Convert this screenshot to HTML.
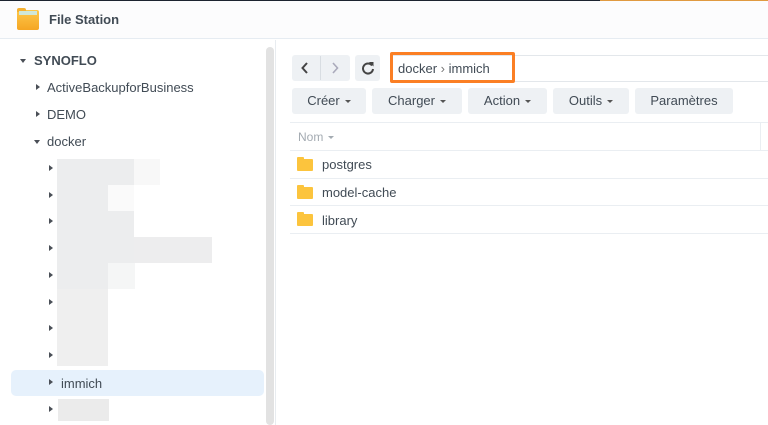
<!DOCTYPE html>
<html><head><meta charset="utf-8"><style>
*{box-sizing:border-box;margin:0;padding:0}
body{width:768px;height:425px;overflow:hidden;background:#fff;font-family:"Liberation Sans",sans-serif;position:relative;color:#414b55}
.a{position:absolute}
.topline{left:0;top:0;width:768px;height:1px;background:#1c2430}
.title{left:0;top:1px;width:768px;height:38px;background:#fcfcfd;border-bottom:1px solid #e6ecf2}
.tt{left:49px;top:12px;font-size:13px;font-weight:bold;color:#414b55}
.tri{width:0;height:0;border-left:4px solid #4a4f57;border-top:3.5px solid transparent;border-bottom:3.5px solid transparent}
.trd{width:0;height:0;border-top:4px solid #4a4f57;border-left:3.5px solid transparent;border-right:3.5px solid transparent}
.lbl{font-size:13px;color:#414b55}
.blk{background:#ecedee}
.btn{background:#eef1f4;border-radius:3px;font-size:13px;color:#414b55;text-align:center;line-height:26px;height:26px}
.car{display:inline-block;width:0;height:0;border-top:3px solid #555;border-left:3px solid transparent;border-right:3px solid transparent;vertical-align:middle;margin-left:5px}
.row{left:290px;width:478px;height:1px;background:#eaeef2}
.fold{width:16px;height:12px;background:#fcc43d;border-radius:1px}
.fold:before{content:"";position:absolute;left:0;top:-2px;width:7px;height:3px;background:#fcc43d;border-radius:1px 1px 0 0}
</style></head><body>
<div class="a topline"></div>
<div class="a" style="left:600px;top:0;width:168px;height:1px;background:#e09a40"></div>
<div class="a title"></div>
<div class="a" style="left:17px;top:10px;width:22px;height:20px;background:linear-gradient(#fdc84a,#f5a623);border-radius:2px"></div>
<div class="a" style="left:17px;top:8px;width:9px;height:4px;background:#f5b030;border-radius:2px 2px 0 0"></div>
<div class="a" style="left:19px;top:11px;width:18px;height:4px;background:#cfe7d8"></div>
<div class="a tt">File Station</div>
<!-- left -->
<div class="a" style="left:266px;top:47px;width:8px;height:378px;background:#e2e2e2;border-radius:4px"></div>
<div class="a" style="left:275px;top:40px;width:1px;height:385px;background:#e8ecf0"></div>
<div class="a trd" style="left:20px;top:59px"></div>
<div class="a lbl" style="left:34px;top:53px;font-weight:bold">SYNOFLO</div>
<div class="a tri" style="left:36px;top:84px"></div>
<div class="a lbl" style="left:47px;top:80px">ActiveBackupforBusiness</div>
<div class="a tri" style="left:36px;top:111px"></div>
<div class="a lbl" style="left:47px;top:107px">DEMO</div>
<div class="a trd" style="left:34px;top:140px"></div>
<div class="a lbl" style="left:47px;top:134px">docker</div>
<div class="a tri" style="left:49px;top:165px"></div>
<div class="a tri" style="left:49px;top:192px"></div>
<div class="a tri" style="left:49px;top:218px"></div>
<div class="a tri" style="left:49px;top:245px"></div>
<div class="a tri" style="left:49px;top:272px"></div>
<div class="a tri" style="left:49px;top:299px"></div>
<div class="a tri" style="left:49px;top:325px"></div>
<div class="a tri" style="left:49px;top:352px"></div>
<div class="a tri" style="left:49px;top:406px"></div>
<div class="a blk" style="left:57px;top:159px;width:77px;height:57px"></div>
<div class="a" style="left:134px;top:159px;width:26px;height:26px;background:#f8f8f8"></div>
<div class="a" style="left:108px;top:185px;width:26px;height:26px;background:#fafafa"></div>
<div class="a blk" style="left:57px;top:211px;width:77px;height:52px"></div>
<div class="a" style="left:134px;top:237px;width:78px;height:26px;background:#ededee"></div>
<div class="a blk" style="left:57px;top:263px;width:51px;height:26px"></div>
<div class="a" style="left:108px;top:263px;width:27px;height:26px;background:#f5f6f6"></div>
<div class="a blk" style="left:57px;top:289px;width:51px;height:77px;background:#efefef"></div>
<div class="a" style="left:11px;top:370px;width:253px;height:26px;background:#e6f1fc;border-radius:5px"></div>
<div class="a tri" style="left:49px;top:379px"></div>
<div class="a lbl" style="left:61px;top:376px">immich</div>
<div class="a blk" style="left:58px;top:399px;width:51px;height:22px;background:#ebebeb"></div>
<!-- right -->
<div class="a" style="left:292px;top:55px;width:58px;height:26px;background:#eef1f4;border-radius:3px"></div>
<div class="a" style="left:320px;top:56px;width:1px;height:24px;background:#d8dde2"></div>
<svg class="a" style="left:300px;top:61px" width="10" height="14"><path d="M7 2 L2.5 7 L7 12" stroke="#444" stroke-width="2" fill="none"/></svg>
<svg class="a" style="left:330px;top:61px" width="10" height="14"><path d="M3 2 L7.5 7 L3 12" stroke="#aab" stroke-width="1.6" fill="none"/></svg>
<div class="a" style="left:355px;top:55px;width:25px;height:26px;background:#eef1f4;border-radius:3px"></div>
<svg class="a" style="left:361px;top:61px" width="14" height="14"><path d="M11 4.5 A5 5 0 1 0 12 8" stroke="#444" stroke-width="2" fill="none"/><path d="M8 1 L12.5 1 L12.5 5.5 Z" fill="#444"/></svg>
<div class="a" style="left:390px;top:55px;width:378px;height:27px;border-top:1px solid #e3e7eb;border-bottom:1px solid #e3e7eb"></div>
<div class="a" style="left:390px;top:52px;width:125px;height:31px;border:3px solid #fb7f24;border-radius:2px"></div>
<div class="a" style="left:398px;top:61px;font-size:13px;color:#414b55">docker <span style="color:#777">›</span> immich</div>
<div class="a btn" style="left:292px;top:88px;width:74px">Créer<span class="car"></span></div>
<div class="a btn" style="left:372px;top:88px;width:90px">Charger<span class="car"></span></div>
<div class="a btn" style="left:468px;top:88px;width:79px">Action<span class="car"></span></div>
<div class="a btn" style="left:553px;top:88px;width:76px">Outils<span class="car"></span></div>
<div class="a btn" style="left:635px;top:88px;width:98px">Paramètres</div>
<div class="a row" style="top:122px"></div>
<div class="a" style="left:760px;top:123px;width:1px;height:27px;background:#eaeef2"></div>
<div class="a" style="left:298px;top:130px;font-size:12px;color:#a4abb2">Nom<span class="car" style="border-top-color:#a4abb2"></span></div>
<div class="a row" style="top:150px"></div>
<div class="a fold" style="left:297px;top:159px"></div>
<div class="a lbl" style="left:322px;top:157px">postgres</div>
<div class="a row" style="top:178px"></div>
<div class="a fold" style="left:297px;top:187px"></div>
<div class="a lbl" style="left:322px;top:185px">model-cache</div>
<div class="a row" style="top:205px"></div>
<div class="a fold" style="left:297px;top:214px"></div>
<div class="a lbl" style="left:322px;top:213px">library</div>
<div class="a row" style="top:233px"></div>
</body></html>
